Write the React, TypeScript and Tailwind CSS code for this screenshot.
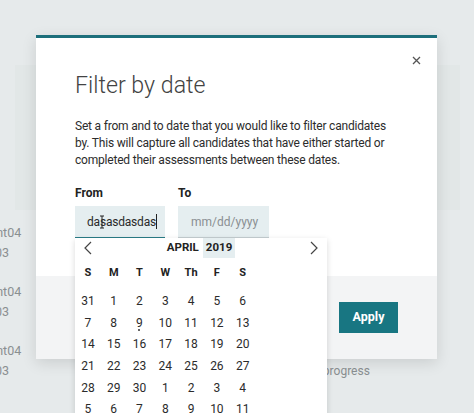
import React from 'react';

const rows = [
  ['31', '1', '2', '3', '4', '5', '6'],
  ['7', '8', '9', '10', '11', '12', '13'],
  ['14', '15', '16', '17', '18', '19', '20'],
  ['21', '22', '23', '24', '25', '26', '27'],
  ['28', '29', '30', '1', '2', '3', '4'],
  ['5', '6', '7', '8', '9', '10', '11'],
];
const dayNames = ['S', 'M', 'T', 'W', 'Th', 'F', 'S'];

// background table rows peeking out from under the overlay
const BgRow = () => (
  <div className="h-[59px] flex flex-col justify-center text-[12.5px] leading-[20px] text-[#8a8f91]">
    <div className="-ml-[62px] whitespace-nowrap">Assessment04</div>
    <div className="-ml-[19px] whitespace-nowrap">0003</div>
  </div>
);

const Calendar = () => (
  <div className="absolute left-0 top-[53px] w-[252px] h-[200px] bg-white shadow-[0_2px_6px_rgba(0,0,0,0.15)] z-20">
    <div className="h-[20px] flex items-center justify-between px-[9px]">
      <svg width="8" height="14" viewBox="0 0 8 14" fill="none" stroke="#444" strokeWidth="1.2">
        <path d="M7 1 1 7l6 6" />
      </svg>
      <div className="flex items-stretch h-[20px] text-[11.5px] font-bold text-[#222]">
        <span className="flex items-center pr-[4px]">APRIL</span>
        <span className="flex items-center px-[3px] bg-[#e5eef0]">2019</span>
      </div>
      <svg width="8" height="14" viewBox="0 0 8 14" fill="none" stroke="#444" strokeWidth="1.2">
        <path d="m1 1 6 6-6 6" />
      </svg>
    </div>
    <div className="grid grid-cols-[repeat(7,25.8px)] mt-[5px] h-[20px] items-center text-[11px] font-bold text-[#222]">
      {dayNames.map((d, i) => (
        <div key={i} className="text-center">{d}</div>
      ))}
    </div>
    <div className="mt-[7px] flex flex-col">
      {rows.map((r, ri) => (
        <div key={ri} className="grid grid-cols-[repeat(7,25.8px)] h-[21.7px] items-center text-[12px] text-[#2b2b2b]">
          {r.map((d, i) => (
            <div key={i} className="text-center relative">
              {d}
              {ri === 1 && d === '9' && (
                <span className="absolute left-1/2 -translate-x-1/2 top-[15px] w-[2px] h-[2px] rounded-full bg-[#333]" />
              )}
            </div>
          ))}
        </div>
      ))}
    </div>
  </div>
);

export default function App() {
  return (
    <div
      className="relative w-[474px] h-[413px] overflow-hidden bg-[#e6eaeb]"
      style={{ fontFamily: 'Roboto, "Liberation Sans", sans-serif' }}
    >
      {/* page behind the overlay */}
      <div className="flex flex-col pt-[213px]">
        <BgRow />
        <BgRow />
        <BgRow />
      </div>
      <div className="absolute left-[310px] top-[362px] text-[12px] text-[#8a8f91]">In progress</div>
      <div className="absolute left-[15px] top-[65px] w-[445px] h-[145px] bg-[#dfe4e5]/60" />

      {/* modal */}
      <div className="absolute left-[36px] top-[35px] w-[401px] border-t-[3px] border-[#1d6f7b] shadow-[0_4px_14px_rgba(0,0,0,0.12)] z-10">
        <div className="relative bg-white px-[39px] pt-[31px] pb-[38px]">
          <button className="absolute right-[15px] top-[16px] w-[12px] h-[12px] flex items-center justify-center">
            <svg width="9" height="9" viewBox="0 0 9 9" stroke="#555" strokeWidth="1.3">
              <path d="M1 1l7 7M8 1 1 8" />
            </svg>
          </button>
          <h2 className="text-[23.2px] leading-[32px] font-light text-[#434343]">Filter by date</h2>
          <p className="mt-[17px] text-[12px] tracking-[-0.2px] leading-[17px] text-[#2c2c2c] whitespace-nowrap">
            Set a from and to date that you would like to filter candidates
            <br />
            by. This will capture all candidates that have either started or
            <br />
            completed their assessments between these dates.
          </p>
          <div className="mt-[16px] flex gap-[13px]">
            <div className="relative w-[90px]">
              <label className="block text-[12px] leading-[16px] font-bold text-[#222]">From</label>
              <div className="relative mt-[5px] h-[32px] bg-[#e5eef0] border-b border-[#2a7c87] flex items-center pl-[12px] text-[12px] tracking-[-0.2px] text-[#2a2a2a]">
                <span>dasasdasdas</span>
                <span className="w-px h-[15px] bg-[#222]" />
                <svg className="absolute left-[24px] top-[9px]" width="7" height="14" viewBox="0 0 7 14" fill="none" stroke="#222" strokeWidth="1">
                  <path d="M1 1h2m2 0H3v12m-2 0h2m2 0H3" />
                </svg>
              </div>
              <Calendar />
            </div>
            <div className="w-[91px]">
              <label className="block text-[12px] leading-[16px] font-bold text-[#222]">To</label>
              <div className="mt-[5px] h-[32px] bg-[#e5eef0] border-b border-[#c5ced1] flex items-center pl-[13px] text-[12px] text-[#8a8f92]">
                mm/dd/yyyy
              </div>
            </div>
          </div>
        </div>
        <div className="bg-[#f3f4f5] h-[83px] flex items-center justify-end pr-[39px]">
          <button className="w-[59px] h-[31px] bg-[#187682] text-white text-[12.5px] font-bold">Apply</button>
        </div>
      </div>
    </div>
  );
}
